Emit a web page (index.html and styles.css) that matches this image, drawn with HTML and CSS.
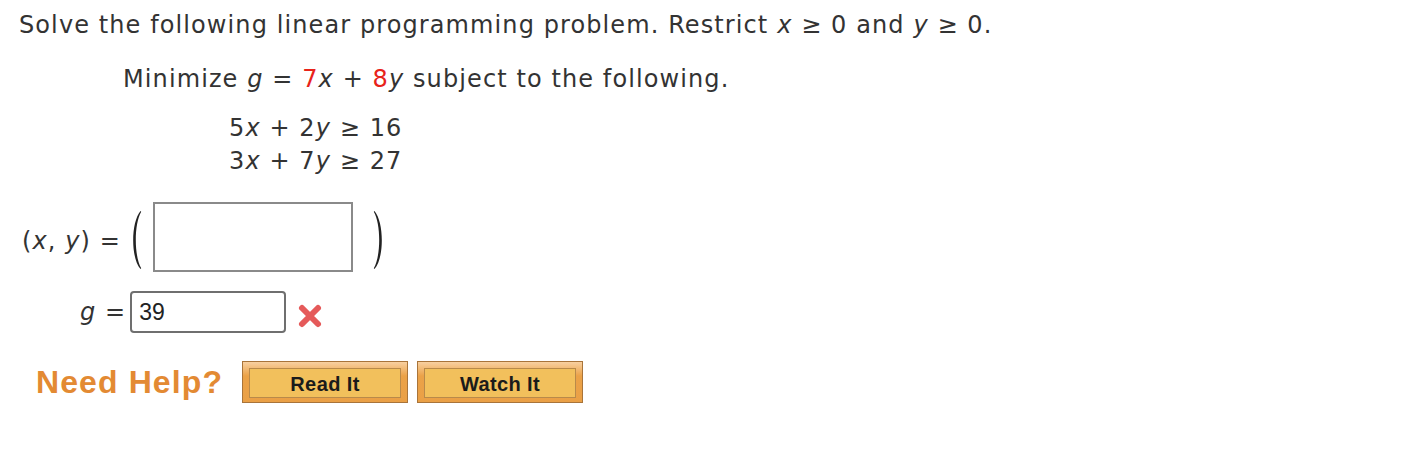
FILE: index.html
```html
<!DOCTYPE html>
<html>
<head>
<meta charset="utf-8">
<link rel="stylesheet" href="styles.css">
</head>
<body>
<div class="page">
  <p class="intro">Solve the following linear programming problem. Restrict <i>x</i> ≥ 0 and <i>y</i> ≥ 0.</p>
  <p class="objective">Minimize <i>g</i> = <span class="red">7</span><i>x</i> + <span class="red">8</span><i>y</i> subject to the following.</p>
  <div class="constraints">
    <div>5<i>x</i> + 2<i>y</i> ≥ 16</div>
    <div>3<i>x</i> + 7<i>y</i> ≥ 27</div>
  </div>
  <div class="point-row">
    <span class="label">(<i>x</i>, <i>y</i>) =</span>
    <svg class="paren" width="14" height="60" viewBox="0 0 14 60"><path d="M11.5 1 C2 12 1.5 48 11.5 59 L12.2 58.3 C5 46 5 14 12.2 1.7 Z" fill="#222"/></svg>
    <span class="bigbox"></span>
    <svg class="paren" width="14" height="60" viewBox="0 0 14 60"><path d="M2.5 1 C12 12 12.5 48 2.5 59 L1.8 58.3 C9 46 9 14 1.8 1.7 Z" fill="#222"/></svg>
  </div>
  <div class="g-row">
    <span class="label"><i>g</i> =</span>
    <span class="answer">39</span>
    <svg class="wrong" width="26" height="26" viewBox="0 0 26 26"><path d="M5 5 L21 21 M21 5 L5 21" stroke="#e55a5a" stroke-width="6" stroke-linecap="round"/></svg>
  </div>
  <div class="help-row">
    <span class="need">Need Help?</span>
    <span class="btn"><span class="btn-in">Read It</span></span>
    <span class="btn"><span class="btn-in">Watch It</span></span>
  </div>
</div>
</body>
</html>
```

FILE: styles.css
```css
html, body { margin: 0; padding: 0; background: #fff; }
body { font-family: Verdana, "DejaVu Sans", sans-serif; color: #333; font-size: 24px; letter-spacing: 1.1px; }
.page { padding: 8px 0 0 19px; }
p { margin: 0; }
.intro { line-height: 34px; }
.objective { margin: 20px 0 0 104px; line-height: 34px; }
.red { color: #e8231a; }
.constraints { margin: 16px 0 0 210px; line-height: 33px; }
.point-row { display: flex; align-items: center; margin-top: 24px; height: 70px; padding-left: 3px; }
.point-row .label { margin-right: 8px; margin-top: 8px; }
.paren { display: block; margin-top: 6px; }
.bigbox { width: 196px; height: 66px; border: 2px solid #8a8a8a; margin: 0 19px 0 10px; }
.g-row { display: flex; align-items: center; margin-top: 19px; padding-left: 61px; height: 42px; }
.g-row .label { margin-right: 4px; }
.answer { box-sizing: border-box; width: 156px; height: 42px; border: 2px solid #6f6f6f; border-radius: 4px; font-family: "Liberation Sans", Arial, sans-serif; font-size: 23px; letter-spacing: 0; color: #222; padding: 0 0 0 7px; display: flex; align-items: center; }
.wrong { margin-left: 11px; margin-top: 8px; }
.help-row { display: flex; align-items: center; margin-top: 28px; padding-left: 17px; }
.need { font-family: "Liberation Sans", Arial, sans-serif; font-weight: bold; font-size: 32px; color: #e38a33; letter-spacing: 1.1px; margin-right: 19px; }
.btn { box-sizing: border-box; width: 166px; height: 42px; border: 1px solid #a9743a; background: linear-gradient(#f8d0a0, #eba248 35%, #eaa046); padding: 6px 6px 4px 6px; margin-right: 9px; display: flex; }
.btn-in { flex: 1; border: 1px solid #b98a4a; background: #f2c05c; font-family: "Liberation Sans", Arial, sans-serif; font-weight: bold; font-size: 20px; letter-spacing: 0.4px; color: #1b1b1b; display: flex; align-items: center; justify-content: center; padding-top: 2px; }
```
